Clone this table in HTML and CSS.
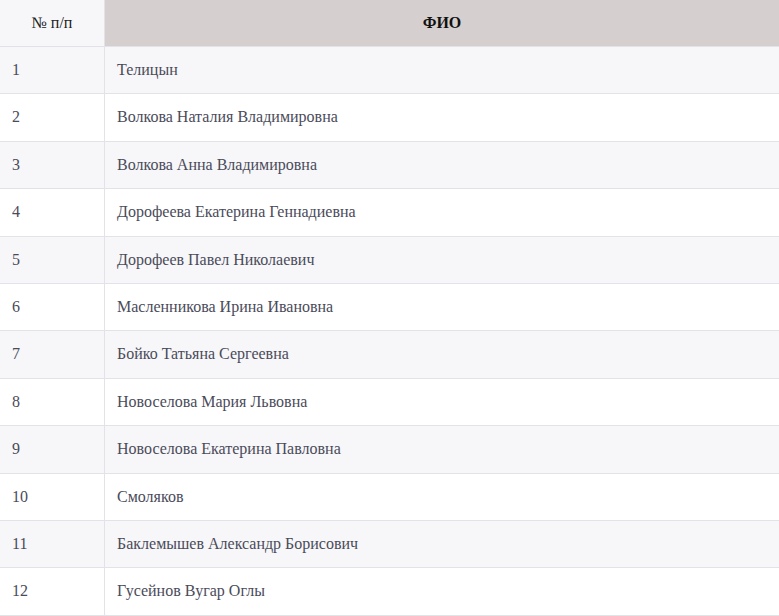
FILE: index.html
```html
<!DOCTYPE html>
<html lang="ru">
<head>
<meta charset="utf-8">
<link rel="stylesheet" href="styles.css">
</head>
<body>
<table class="list">
  <thead>
    <tr><th class="num">№ п/п</th><th class="name">ФИО</th></tr>
  </thead>
  <tbody>
    <tr><td>1</td><td>Телицын</td></tr>
    <tr><td>2</td><td>Волкова Наталия Владимировна</td></tr>
    <tr><td>3</td><td>Волкова Анна Владимировна</td></tr>
    <tr><td>4</td><td>Дорофеева Екатерина Геннадиевна</td></tr>
    <tr><td>5</td><td>Дорофеев Павел Николаевич</td></tr>
    <tr><td>6</td><td>Масленникова Ирина Ивановна</td></tr>
    <tr><td>7</td><td>Бойко Татьяна Сергеевна</td></tr>
    <tr><td>8</td><td>Новоселова Мария Львовна</td></tr>
    <tr><td>9</td><td>Новоселова Екатерина Павловна</td></tr>
    <tr><td>10</td><td>Смоляков</td></tr>
    <tr><td>11</td><td>Баклемышев Александр Борисович</td></tr>
    <tr><td>12</td><td>Гусейнов Вугар Оглы</td></tr>
  </tbody>
</table>
</body>
</html>
```
FILE: styles.css
```css
html, body {
  margin: 0;
  padding: 0;
  background: #ffffff;
}
.list {
  width: 779px;
  border-collapse: collapse;
  font-family: "Liberation Serif", "Times New Roman", serif;
  font-size: 16px;
  color: #4a4b5a;
}
.list th, .list td {
  border-bottom: 1px solid #e2e2e8;
  line-height: 18.4px;
  padding: 14px 12px;
  text-align: left;
}
.list th {
  padding: 13.8px 12px;
  text-align: center;
  font-weight: normal;
  color: #222222;
}
.list th.num {
  width: 80px;
  background: #f7f7f9;
  border-right: 1px solid #e2e2e8;
}
.list th.name {
  background: #d5d0cf;
  font-weight: bold;
  color: #111111;
}
.list td:first-child {
  width: 80px;
  border-right: 1px solid #e2e2e8;
}
.list tbody tr:nth-child(odd) td {
  background: #f7f7f9;
}
.list tbody tr:nth-child(even) td {
  background: #ffffff;
}
```
